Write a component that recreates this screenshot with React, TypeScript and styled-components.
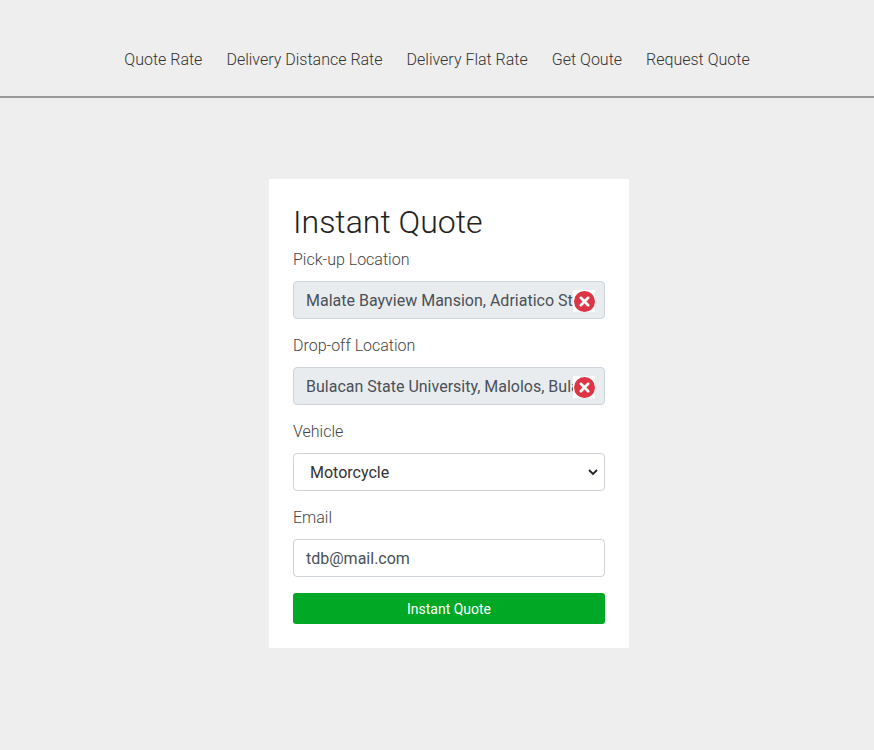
import React from "react";
import styled, {createGlobalStyle} from "styled-components";

const Global = createGlobalStyle`
    body {
        margin: 0;
        background: #eeeeee;
        font-family: Roboto, "Liberation Sans", sans-serif;
    }
`

const Header = styled.nav`
    height: 98px;
    border-bottom: 2px solid #999;
    display: flex;
    justify-content: center;
    align-items: flex-start;
    padding-top: 50px;
    box-sizing: border-box;
`

const NavLink = styled.a`
    padding: 0 12px;
    font-size: 16px;
    font-weight: 300;
    line-height: 20px;
    color: #333;
    text-decoration: none;
`

const Main = styled.main`
    display: flex;
    justify-content: center;
    padding-top: 81px;
    padding-left: 24px;
`

const Card = styled.div`
    width: 360px;
    box-sizing: border-box;
    background: #fff;
    padding: 24px 24px 24px;
`

const Title = styled.h1`
    margin: 0 0 7px;
    font-size: 32px;
    font-weight: 300;
    line-height: 38px;
    color: #222;
`

const Group = styled.div`
    margin-bottom: 15px;
`

const Label = styled.label`
    display: block;
    font-size: 16px;
    font-weight: 300;
    line-height: 24px;
    color: #444;
    margin-bottom: 9px;
`

const Field = styled.div<{ $readonly?: boolean; $select?: boolean }>`
    position: relative;
    height: 38px;
    box-sizing: border-box;
    border: 1px solid #ced4da;
    border-radius: 4px;
    background: ${p => p.$readonly ? "#e9ecef" : "#fff"};
    display: flex;
    align-items: center;
    padding: ${p => p.$select ? "0 6px 0 16px" : "0 12px"};
    font-size: 16px;
    color: ${p => p.$select ? "#333" : "#495057"};
    overflow: hidden;
`

const FieldText = styled.span`
    white-space: nowrap;
    overflow: hidden;
    flex: 1;
`

const Clear = styled.span`
    position: absolute;
    right: 9px;
    top: 8px;
    width: 22px;
    height: 22px;
    background: #fff;
    display: flex;
    align-items: center;
    justify-content: center;
`

const Chevron = styled.svg`
    margin-left: auto;
`

const Button = styled.button`
    width: 100%;
    height: 31px;
    margin-top: 1px;
    border: none;
    border-radius: 3px;
    background: #00a825;
    color: #fff;
    font-family: Roboto, "Liberation Sans", sans-serif;
    font-size: 14px;
    font-weight: 400;
`

const ClearIcon = () => (
    <Clear>
        <svg width="21" height="21" viewBox="0 0 20 20">
            <circle cx="10" cy="10" r="10" fill="#dc3545"/>
            <path d="M6.5 6.5L13.5 13.5M13.5 6.5L6.5 13.5" stroke="#fff" strokeWidth="2.6" strokeLinecap="round"/>
        </svg>
    </Clear>
)

export default function App() {
    return (
        <>
            <Global/>
            <Header>
                {["Quote Rate", "Delivery Distance Rate", "Delivery Flat Rate", "Get Qoute", "Request Quote"].map(n =>
                    <NavLink key={n} href="#">{n}</NavLink>
                )}
            </Header>
            <Main>
                <Card>
                    <Title>Instant Quote</Title>
                    <Group>
                        <Label>Pick-up Location</Label>
                        <Field $readonly>
                            <FieldText>Malate Bayview Mansion, Adriatico Street, Malate, Manila</FieldText>
                            <ClearIcon/>
                        </Field>
                    </Group>
                    <Group>
                        <Label>Drop-off Location</Label>
                        <Field $readonly>
                            <FieldText>Bulacan State University, Malolos, Bulacan</FieldText>
                            <ClearIcon/>
                        </Field>
                    </Group>
                    <Group>
                        <Label>Vehicle</Label>
                        <Field $select>
                            <FieldText>Motorcycle</FieldText>
                            <Chevron width="10" height="8" viewBox="0 0 10 8">
                                <path d="M1 2l4 4 4-4" fill="none" stroke="#222" strokeWidth="1.8"/>
                            </Chevron>
                        </Field>
                    </Group>
                    <Group>
                        <Label>Email</Label>
                        <Field>
                            <FieldText>tdb@mail.com</FieldText>
                        </Field>
                    </Group>
                    <Button>Instant Quote</Button>
                </Card>
            </Main>
        </>
    )
}
